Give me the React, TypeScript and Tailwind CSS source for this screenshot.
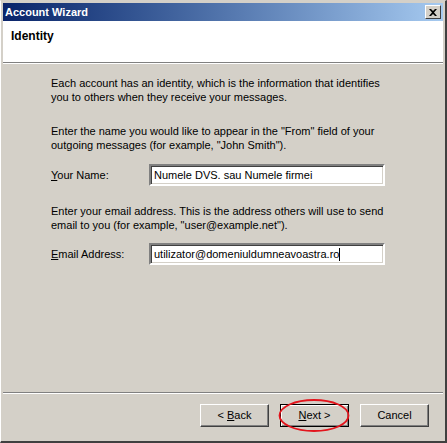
export default function App() {
  const font = { fontFamily: '"Liberation Sans", Tahoma, sans-serif' };
  return (
    <div className="w-[447px] h-[443px] bg-[#d4d0c8] text-[11px] text-black" style={font}>
      <div className="w-full h-full flex flex-col border-t border-l border-t-[#d4d0c8] border-l-[#ffffff] border-r-2 border-b-2 border-r-[#404040] border-b-[#404040] p-[2px]">
        {/* title bar */}
        <div className="h-[18px] flex items-center justify-between pl-[2px] pr-[2px] bg-gradient-to-r from-[#0a246a] to-[#a6caf0]">
          <span className="text-white font-bold text-[11px] leading-none">Account Wizard</span>
          <div className="w-[16px] h-[14px] bg-[#d4d0c8] border border-t-white border-l-white border-r-[#404040] border-b-[#404040] flex items-center justify-center">
            <svg width="8" height="7" viewBox="0 0 8 7">
              <path d="M0 0h2l2 2 2-2h2L5 3.5 8 7H6L4 5 2 7H0l3-3.5z" fill="#000" />
            </svg>
          </div>
        </div>
        {/* header */}
        <div className="h-[42px] bg-white pl-[8px] pt-[6px] border-b border-b-[#808080]">
          <span className="font-bold text-[12px]">Identity</span>
        </div>
        <div className="h-px bg-white" />
        {/* body */}
        <div className="flex-1 pl-[48px] pt-[12px] leading-[14px] whitespace-nowrap">
          <p>
            Each account has an identity, which is the information that identifies
            <br />
            you to others when they receive your messages.
          </p>
          <p className="mt-[20px]">
            Enter the name you would like to appear in the "From" field of your
            <br />
            outgoing messages (for example, "John Smith").
          </p>
          <div className="flex items-center mt-[12px]">
            <span className="w-[98px]">
              <span className="underline">Y</span>our Name:
            </span>
            <div className="w-[236px] h-[22px] bg-white border-2 border-t-[#808080] border-l-[#808080] border-r-white border-b-white shadow-[inset_1px_1px_0_#404040,inset_-1px_-1px_0_#d4d0c8] flex items-center px-[3px]">
              Numele DVS. sau Numele firmei
            </div>
          </div>
          <p className="mt-[18px]">
            Enter your email address. This is the address others will use to send
            <br />
            email to you (for example, "user@example.net").
          </p>
          <div className="flex items-center mt-[11px]">
            <span className="w-[98px]">
              <span className="underline">E</span>mail Address:
            </span>
            <div className="w-[236px] h-[22px] bg-white border-2 border-t-[#808080] border-l-[#808080] border-r-white border-b-white shadow-[inset_1px_1px_0_#404040,inset_-1px_-1px_0_#d4d0c8] flex items-center px-[3px]">
              utilizator@domeniuldumneavoastra.ro
              <span className="w-px h-[13px] bg-black" />
            </div>
          </div>
        </div>
        {/* footer */}
        <div className="h-px bg-[#808080]" />
        <div className="h-px bg-white" />
        <div className="h-[45px] flex items-start justify-end gap-[11px] pt-[10px] pr-[14px]">
          <button className="w-[69px] h-[23px] bg-[#d4d0c8] border border-t-white border-l-white border-r-[#404040] border-b-[#404040] shadow-[inset_-1px_-1px_0_#808080]">
            &lt; <span className="underline">B</span>ack
          </button>
          <div className="relative">
            <button className="w-[69px] h-[23px] bg-[#d4d0c8] border border-black shadow-[inset_1px_1px_0_#fff,inset_-1px_-1px_0_#808080]">
              <span className="underline">N</span>ext &gt;
            </button>
            <svg className="absolute -left-[2px] -top-[5px]" width="73" height="34" viewBox="0 0 73 34">
              <ellipse cx="36" cy="16.5" rx="34.5" ry="15.5" fill="none" stroke="#e3141c" strokeWidth="1.8" />
            </svg>
          </div>
          <button className="w-[69px] h-[23px] bg-[#d4d0c8] border border-t-white border-l-white border-r-[#404040] border-b-[#404040] shadow-[inset_-1px_-1px_0_#808080]">
            Cancel
          </button>
        </div>
      </div>
    </div>
  );
}
